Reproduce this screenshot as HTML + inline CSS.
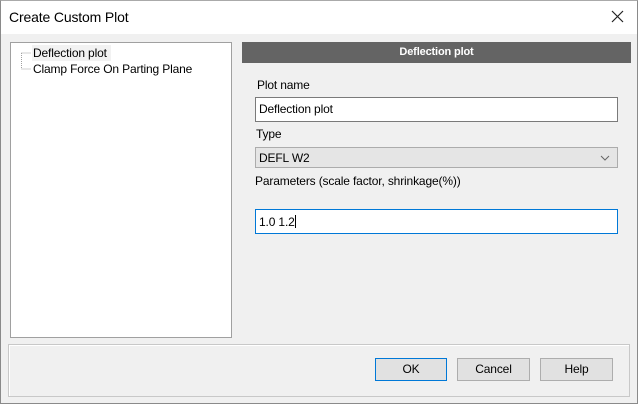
<!DOCTYPE html>
<html><head><style>
*{margin:0;padding:0;box-sizing:border-box}
body{width:638px;height:404px;overflow:hidden;background:#f0f0f0;font-family:"Liberation Sans",sans-serif;font-size:12px;color:#000;position:relative;letter-spacing:-0.15px}
.a{position:absolute}
.win{left:0;top:0;width:638px;height:404px;border:1px solid #8a8a8a;border-top-color:#aaa}
.title{left:1px;top:1px;width:636px;height:33px;background:#fff}
.inp{background:#fff;border:1px solid #7a7a7a;padding:3px 0 0 3px;font-size:12px}
.btn{background:#e1e1e1;border:1px solid #adadad;text-align:center;line-height:21px;font-size:12px}
</style></head><body>
<div class="a win"></div>
<div class="a title"></div>
<div class="a" style="left:9px;top:9px;font-size:14px">Create Custom Plot</div>
<svg class="a" style="left:611px;top:10px" width="13" height="13"><path d="M1 1L12 12M12 1L1 12" stroke="#222" stroke-width="1.2"/></svg>
<div class="a" style="left:10px;top:42px;width:222px;height:296px;background:#fff;border:1px solid #a0a0a0"></div>
<div class="a" style="left:32px;top:45px;width:79px;height:16px;background:#f2f2f2"></div>
<svg class="a" style="left:20px;top:50px" width="14" height="22"><path d="M1.5 3H11M1.5 3V19H11" stroke="#a0a0a0" stroke-dasharray="1 1" fill="none"/></svg>
<div class="a" style="left:33px;top:46px;font-size:12px">Deflection plot</div>
<div class="a" style="left:33px;top:62px;font-size:12px">Clamp Force On Parting Plane</div>
<div class="a" style="left:242px;top:42px;width:389px;height:21px;background:#646464;color:#fff;font-weight:bold;font-size:11px;text-align:center;line-height:21px">Deflection plot</div>
<div class="a" style="left:257px;top:78px">Plot name</div>
<div class="a inp" style="left:255px;top:97px;width:363px;height:25px;padding-top:4px">Deflection plot</div>
<div class="a" style="left:256px;top:127px">Type</div>
<div class="a" style="left:255px;top:147px;width:363px;height:21px;background:#e5e5e5;border:1px solid #acacac;padding:3px 0 0 3px">DEFL W2</div>
<svg class="a" style="left:600px;top:155px" width="10" height="6"><path d="M1 1L5 5L9 1" stroke="#666" fill="none"/></svg>
<div class="a" style="left:255px;top:174px">Parameters (scale factor, shrinkage(%))</div>
<div class="a inp" style="left:255px;top:209px;width:363px;height:25px;border-color:#0078d7;padding-top:5px">1.0 1.2<span style="display:inline-block;width:1px;height:13px;background:#000;vertical-align:-2px"></span></div>
<div class="a" style="left:8px;top:344px;width:622px;height:53px;border:1px solid #c8c8c8;box-shadow:inset 1px 1px 0 #fff"></div>
<div class="a btn" style="left:375px;top:358px;width:72px;height:23px;border:1px solid #0078d7;line-height:21px">OK</div>
<div class="a btn" style="left:457px;top:358px;width:73px;height:23px">Cancel</div>
<div class="a btn" style="left:540px;top:358px;width:73px;height:23px">Help</div>
</body></html>
